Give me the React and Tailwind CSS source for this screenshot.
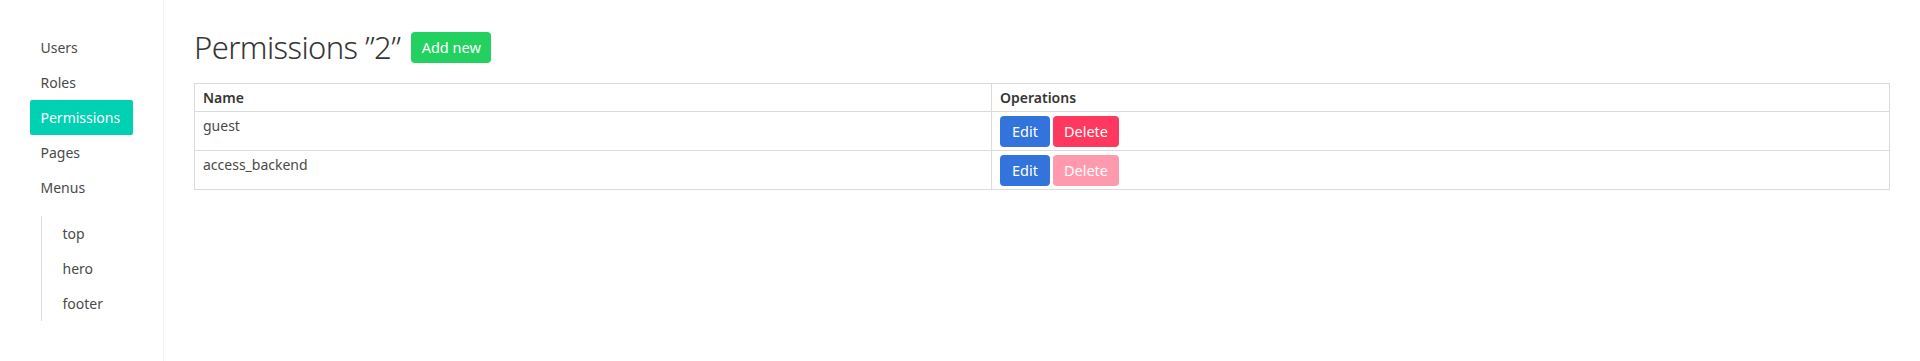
import React from "react";

const font = { fontFamily: '"Noto Sans", "Open Sans", sans-serif' };

function NavItem({ label, active }) {
  return (
    <li>
      <a
        className={
          active
            ? "block rounded-[2px] bg-[#00d1b2] px-[10.5px] py-[7px] text-white leading-[21px]"
            : "block rounded-[2px] px-[10.5px] py-[7px] text-[#4a4a4a] leading-[21px]"
        }
      >
        {label}
      </a>
    </li>
  );
}

function Btn({ children, color, width, disabled }) {
  return (
    <button
      className={
        "h-[31px] rounded-[4px] text-center text-[14.5px] leading-[21px] text-white " +
        color +
        " " +
        width +
        (disabled ? " opacity-50" : "")
      }
    >
      {children}
    </button>
  );
}

export default function App() {
  const rows = [
    { name: "guest", disabled: false },
    { name: "access_backend", disabled: true },
  ];
  return (
    <div className="flex min-h-screen bg-white text-[14px] text-[#4a4a4a]" style={font}>
      <aside className="w-[164px] shrink-0 border-r border-[#f2f2f2] px-[30px] pt-[30px]">
        <ul className="flex flex-col">
          <NavItem label="Users" />
          <NavItem label="Roles" />
          <NavItem label="Permissions" active />
          <NavItem label="Pages" />
          <li>
            <a className="block px-[10.5px] py-[7px] leading-[21px] text-[#4a4a4a]">Menus</a>
            <ul className="my-[10.5px] ml-[10.5px] border-l border-[#dbdbdb] pl-[10.5px]">
              <NavItem label="top" />
              <NavItem label="hero" />
              <NavItem label="footer" />
            </ul>
          </li>
        </ul>
      </aside>
      <main className="flex-1 px-[30px] pt-[29px]">
        <div className="flex items-center gap-[11px]">
          <h1 className="text-[31px] font-light leading-[36px] tracking-[-0.6px] text-[#363636]">
            Permissions ”2”
          </h1>
          <Btn color="bg-[#23d160]" width="w-[80px]">
            Add new
          </Btn>
        </div>
        <table className="mt-[18px] w-full border-collapse border border-[#dbdbdb]">
          <thead>
            <tr className="border-b border-[#dbdbdb]">
              <th className="w-[797px] border-r border-[#dbdbdb] px-[8px] pt-[4px] pb-[3px] text-left font-semibold leading-[20px] text-[#363636]">
                Name
              </th>
              <th className="px-[8px] pt-[4px] pb-[3px] text-left font-semibold leading-[20px] text-[#363636]">
                Operations
              </th>
            </tr>
          </thead>
          <tbody>
            {rows.map((r) => (
              <tr key={r.name} className="border-b border-[#dbdbdb]">
                <td className="border-r border-[#dbdbdb] px-[8px] pt-[4px] pb-[3px] align-top leading-[20px]">
                  {r.name}
                </td>
                <td className="px-[8px] pt-[4px] pb-[3px] align-top">
                  <div className="flex gap-[3px]">
                    <Btn color="bg-[#3273dc]" width="w-[50px]">
                      Edit
                    </Btn>
                    <Btn color="bg-[#ff3860]" width="w-[66px]" disabled={r.disabled}>
                      Delete
                    </Btn>
                  </div>
                </td>
              </tr>
            ))}
          </tbody>
        </table>
      </main>
    </div>
  );
}
